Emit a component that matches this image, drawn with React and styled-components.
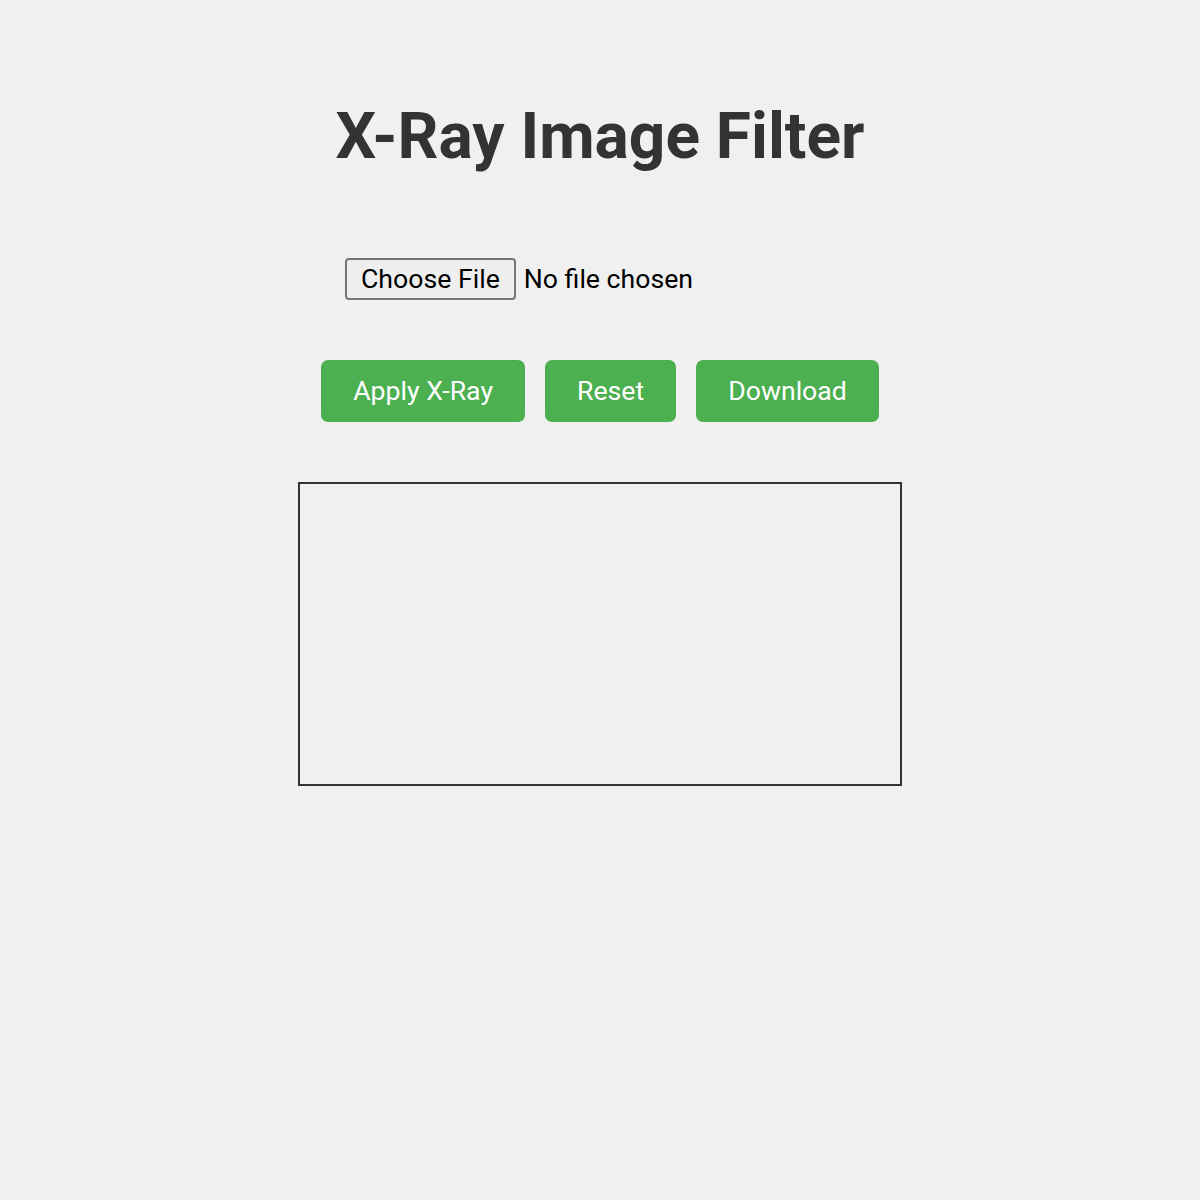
import React from 'react'
import styled, { createGlobalStyle } from 'styled-components';

const GlobalStyle = createGlobalStyle`
  body {
    margin: 0;
    background-color: #f0f0f0;
    font-family: Roboto, "Liberation Sans", sans-serif;
  }
`;

const Page = styled.div`
  display: flex;
  flex-direction: column;
  align-items: center;
  padding-top: 99px;
`;

const Title = styled.h1`
  margin: 0;
  font-size: 64px;
  font-weight: 700;
  line-height: 75px;
  color: #333;
`;

const FileInput = styled.input`
  margin-top: 84px;
  font-family: Roboto, "Liberation Sans", sans-serif;
  font-size: 26.67px;
  color: #000;

  &::file-selector-button {
    font-family: inherit;
    font-size: inherit;
    color: #000;
    background: #efefef;
    border: 2px solid #767676;
    border-radius: 4px;
    padding: 3px 14px;
    margin-right: 8px;
  }
`;

const ButtonRow = styled.div`
  display: flex;
  gap: 20px;
  margin-top: 60px;
`;

const Button = styled.button`
  font-family: Roboto, "Liberation Sans", sans-serif;
  font-size: 26.67px;
  line-height: 32px;
  padding: 15px 32px;
  color: #fff;
  background-color: #4caf50;
  border: none;
  border-radius: 7px;
  cursor: pointer;
`;

const Preview = styled.canvas`
  margin-top: 60px;
  width: 600px;
  height: 300px;
  border: 2px solid #333;
`;

export default function App() {
  return (
    <>
      <GlobalStyle />
      <Page>
        <Title>X-Ray Image Filter</Title>
        <FileInput type="file" accept="image/*" />
        <ButtonRow>
          <Button>Apply X-Ray</Button>
          <Button>Reset</Button>
          <Button>Download</Button>
        </ButtonRow>
        <Preview width={300} height={150} />
      </Page>
    </>
  )
}
